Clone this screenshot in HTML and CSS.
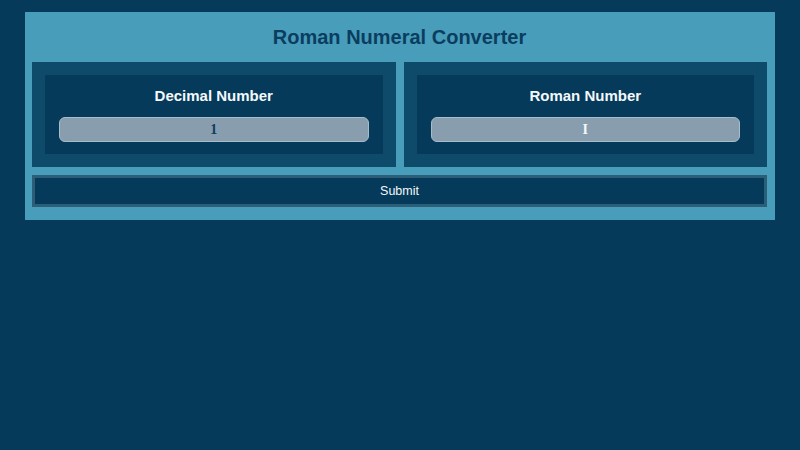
FILE: index.html
```html
<!DOCTYPE html>
<html lang="en">
<head>
<meta charset="utf-8">
<title>Roman Numeral Converter</title>
<link rel="stylesheet" href="styles.css">
</head>
<body>
<main class="converter">
  <h1 class="title">Roman Numeral Converter</h1>
  <div class="panels">
    <section class="panel">
      <div class="panel-inner">
        <h2 class="panel-title">Decimal Number</h2>
        <input class="field field-decimal" type="text" value="1">
      </div>
    </section>
    <section class="panel">
      <div class="panel-inner">
        <h2 class="panel-title">Roman Number</h2>
        <input class="field field-roman" type="text" value="I">
      </div>
    </section>
  </div>
  <button class="submit" type="button">Submit</button>
</main>
</body>
</html>
```
FILE: styles.css
```css
html, body {
  margin: 0;
  padding: 0;
  background: #053a5a;
}
body {
  padding-top: 12px;
  font-family: "Liberation Sans", Arial, sans-serif;
}
.converter {
  box-sizing: border-box;
  width: 750px;
  margin: 0 auto;
  background: #479dba;
  padding: 0 8px 13px 7px;
}
.title {
  margin: 0;
  height: 50px;
  line-height: 50px;
  text-align: center;
  font-size: 20px;
  font-weight: bold;
  color: #0b3d60;
}
.panels {
  display: grid;
  grid-template-columns: 1fr 1fr;
  gap: 8px;
}
.panel {
  background: #0e4b6b;
  padding: 13px;
}
.panel-inner {
  background: #053a5a;
  padding: 12px 14px;
  display: flex;
  flex-direction: column;
  gap: 12px;
}
.panel-title {
  margin: 0;
  height: 18px;
  line-height: 18px;
  text-align: center;
  font-size: 15px;
  font-weight: bold;
  color: #f4f8fb;
}
.field {
  box-sizing: border-box;
  width: 100%;
  height: 25px;
  margin: 0;
  border: 1px solid #a9bccb;
  border-radius: 6px;
  background: #889eae;
  text-align: center;
  font-family: "Liberation Serif", "Times New Roman", serif;
  font-weight: bold;
  font-size: 14px;
  outline: none;
}
.field-decimal {
  color: #0b3d60;
}
.field-roman {
  color: #f4f8fb;
}
.submit {
  display: block;
  box-sizing: border-box;
  width: 100%;
  height: 32px;
  margin-top: 8px;
  border: 3px solid #2c5e78;
  background: #053a5a;
  color: #f4f8fb;
  font-family: "Liberation Sans", Arial, sans-serif;
  font-size: 12.5px;
  cursor: pointer;
}
```
